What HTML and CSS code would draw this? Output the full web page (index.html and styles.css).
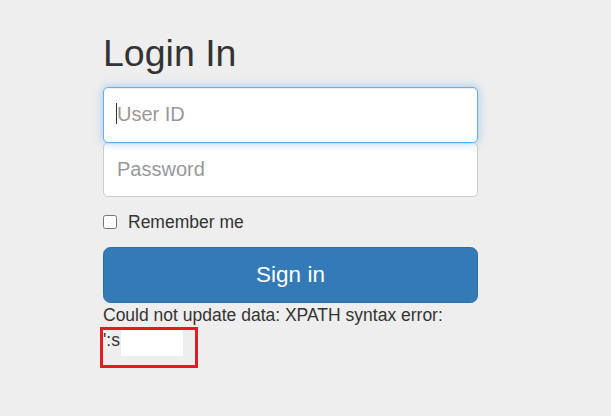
FILE: index.html
```html
<!DOCTYPE html>
<html lang="en">
<head>
<meta charset="utf-8">
<title>Login In</title>
<link rel="stylesheet" href="styles.css">
</head>
<body>
<form class="form-signin">
  <h2 class="form-signin-heading">Login In</h2>
  <div class="field field-focused">
    <input class="form-control focused" type="text" placeholder="User ID">
  </div>
  <div class="field">
    <input class="form-control password" type="password" placeholder="Password">
  </div>
  <div class="checkbox">
    <label class="checkbox-label"><input class="check" type="checkbox" value="remember-me"><span>Remember me</span></label>
  </div>
  <button class="btn-signin" type="button">Sign in</button>
  <div class="error">Could not update data: XPATH syntax error:<br>':s<span class="redact"></span><span class="highlight"></span></div>
</form>
</body>
</html>
```

FILE: styles.css
```css
html, body {
  margin: 0;
  padding: 0;
}

html {
  min-height: 100%;
  background: #eeeeee;
}

body {
  min-height: 416px;
  background: #eeeeee;
  color: #333333;
  font-family: "Liberation Sans", Arial, Helvetica, sans-serif;
  font-size: 17.5px;
  line-height: 25px;
}

.form-signin {
  width: 375px;
  margin-left: 103px;
  padding-top: 8.25px;
  padding-bottom: 40px;
}

.form-signin-heading {
  margin: 25px 0 12.5px;
  font-size: 37.5px;
  line-height: 1.1;
  font-weight: 500;
  color: #333333;
}

.field {
  position: relative;
}

.field-focused {
  z-index: 2;
}

.field-focused::after {
  content: "";
  position: absolute;
  left: 13px;
  top: 16px;
  width: 1px;
  height: 21px;
  background: #333333;
}

.form-control {
  display: block;
  width: 100%;
  box-sizing: border-box;
  margin: 0;
  padding: 12.5px 15px 12.5px 13px;
  font-family: "Liberation Sans", Arial, Helvetica, sans-serif;
  font-size: 20px;
  line-height: 28.6px;
  height: 55.6px;
  color: #555555;
  background: #ffffff;
  border: 1px solid #cccccc;
  border-radius: 5px;
  box-shadow: inset 0 1px 1px rgba(0, 0, 0, 0.075);
  outline: none;
}

.form-control::placeholder {
  color: #999999;
  opacity: 1;
}

.focused {
  margin-bottom: -1px;
  border-color: #66afe9;
  box-shadow: inset 0 1px 1px rgba(0, 0, 0, 0.075), 0 0 10px rgba(102, 175, 233, 0.6);
}

.password {
  margin-bottom: 12.5px;
}

.checkbox {
  margin: 12.5px 0;
}

.checkbox-label {
  display: flex;
  align-items: flex-start;
  gap: 11px;
  line-height: 25px;
}

.check {
  appearance: none;
  -webkit-appearance: none;
  width: 14px;
  height: 14px;
  margin: 5.5px 0 0;
  box-sizing: border-box;
  border: 1px solid #767676;
  border-radius: 2.5px;
  background: #ffffff;
  flex: none;
}

.btn-signin {
  display: block;
  width: 100%;
  box-sizing: border-box;
  height: 56px;
  margin: 0;
  padding: 12px 20px;
  font-family: "Liberation Sans", Arial, Helvetica, sans-serif;
  font-size: 22.5px;
  line-height: 30px;
  color: #ffffff;
  background: #337ab7;
  border: 1px solid #2e6da4;
  border-radius: 7.5px;
  text-align: center;
}

.error {
  position: relative;
  min-height: 66px;
  color: #333333;
}

.redact {
  position: absolute;
  left: 18px;
  top: 24px;
  width: 62px;
  height: 29px;
  background: #ffffff;
}

.highlight {
  position: absolute;
  left: -3px;
  top: 24px;
  width: 98px;
  height: 41px;
  box-sizing: border-box;
  border: 3px solid #e31b23;
}
```
